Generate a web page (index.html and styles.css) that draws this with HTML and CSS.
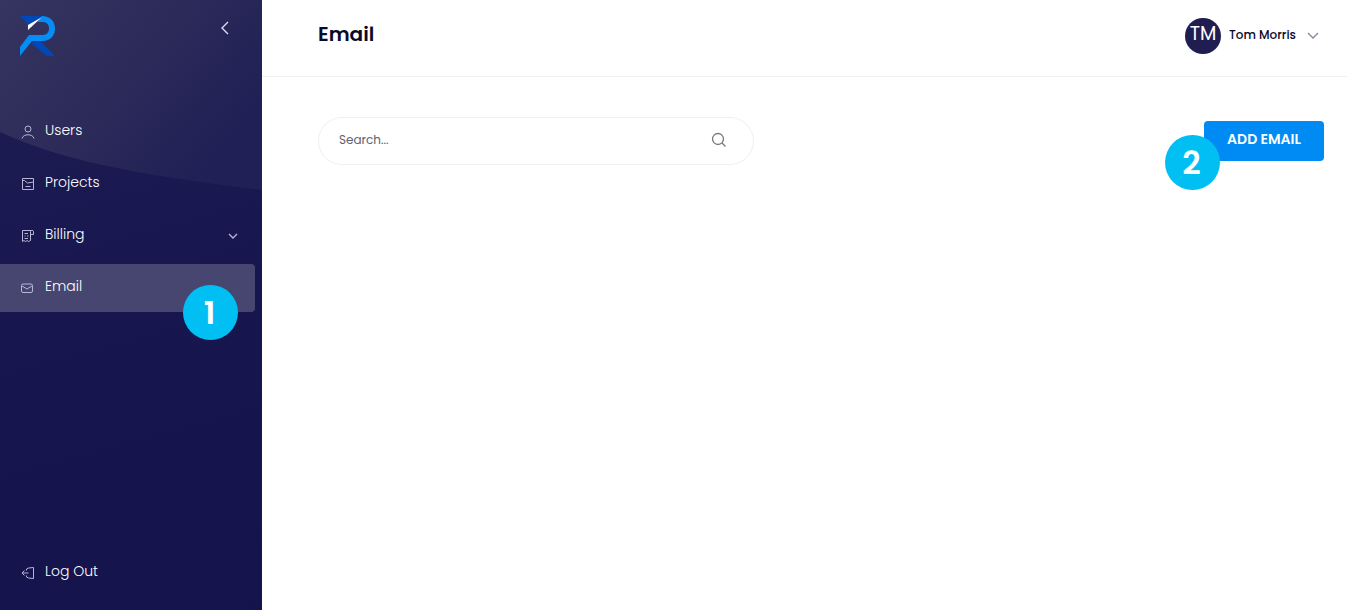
FILE: index.html
```
<!DOCTYPE html>
<html lang="en">
<head>
    <meta charset="UTF-8">
    <meta name="viewport" content="width=device-width, initial-scale=1.0">
    <title>Email</title>
    <link rel="stylesheet" href="styles.css">
</head>
<body>

    <aside class="sidebar">
        <svg class="sidebar-curve" viewBox="0 0 262 190" preserveAspectRatio="none" aria-hidden="true">
            <defs>
                <linearGradient id="curveFill" x1="0" y1="0" x2="1" y2="0.6">
                    <stop offset="0" stop-color="#363561"/>
                    <stop offset="0.5" stop-color="#2c2b59"/>
                    <stop offset="1" stop-color="#201f56"/>
                </linearGradient>
            </defs>
            <path d="M0 0H262V190C165 178 70 165 0 132Z" fill="url(#curveFill)"/>
        </svg>

        <div class="sidebar-top">
            <a href="#" class="logo" aria-label="Home">
                <svg width="36" height="40" viewBox="0 0 36 40">
                    <path d="M0 0H22L8 14L7 7Z" fill="#0048b8"/>
                    <path d="M13 25H20L35 40H27L12 28Z" fill="#0048b8"/>
                    <path d="M22 0C30 0 35 5 35 12.500C35 20 30 25 23 25H12L0 40V31L9 19H23C27 19 29 16 29 12.500C29 9 27 6 23 6H17Z" fill="#058cf5"/>
                    <path d="M8 14V9L22 1Z" fill="#fff"/>
                </svg>
            </a>
            <button class="collapse" aria-label="Collapse menu">
                <svg width="8" height="14" viewBox="0 0 8 14"><path d="M7 1L1 7L7 13"/></svg>
            </button>
        </div>

        <nav class="menu">
            <a href="#" class="menu-item">
                <svg width="14" height="14" viewBox="0 0 14 14"><circle cx="7" cy="4" r="3"/><path d="M1 13.500C2 8.500 12 8.500 13 13.500"/></svg>
                <span>Users</span>
            </a>
            <a href="#" class="menu-item">
                <svg width="14" height="14" viewBox="0 0 14 14"><path d="M1.500 1.500H12.500V12.500H1.500ZM1.500 3.500H3.500L6.500 6L12.500 5M4.500 9.500H9.500"/></svg>
                <span>Projects</span>
            </a>
            <a href="#" class="menu-item">
                <svg width="14" height="14" viewBox="0 0 14 14"><path d="M10.500 1.500H1.500V12.500L3 11.500L4.500 12.500L6 11.500L7.500 12.500L9.500 11.500V2.500C9.500 1 12.500 1 12.500 2.500V5.500H9.500M3.500 4.500H7M3.500 7H4.500M6 7H7.500M3.500 9.500H7"/></svg>
                <span>Billing</span>
                <svg class="menu-arrow" width="10" height="6" viewBox="0 0 10 6"><path d="M1 1L5 5L9 1"/></svg>
            </a>
            <a href="#" class="menu-item active">
                <svg width="14" height="14" viewBox="0 0 14 14"><rect x="0.500" y="3" width="11" height="8.500" rx="1.500"/><path d="M1 5L6 8L11 5"/></svg>
                <span>Email</span>
                <b class="step step-one">1</b>
            </a>
            <a href="#" class="menu-item logout">
                <svg width="14" height="14" viewBox="0 0 14 14"><path d="M5.500 4.500V3L7.500 2L12.500 1.500V12.500L7.500 12L5.500 11V9.500M7.500 7H1M3.500 4.500L1 7L3.500 9.500"/></svg>
                <span>Log Out</span>
            </a>
        </nav>
    </aside>

    <main class="main">
        <header class="header">
            <h1>Email</h1>
            <button class="account">
                <span class="avatar">TM</span>
                <span class="name">Tom Morris</span>
                <svg width="12" height="7" viewBox="0 0 12 7"><path d="M1 1L6 6L11 1"/></svg>
            </button>
        </header>

        <div class="toolbar">
            <form class="search">
                <input type="text" placeholder="Search..." aria-label="Search">
                <button type="button" aria-label="Run search">
                    <svg width="16" height="16" viewBox="0 0 16 16"><circle cx="7" cy="7" r="5.500"/><path d="M11 11L14.500 14.500"/></svg>
                </button>
            </form>
            <button class="add-email">ADD EMAIL<b class="step step-two">2</b></button>
        </div>
    </main>

</body>
</html>
```
FILE: styles.css
```
* {
    box-sizing: border-box;
}
body {
    font-family: Poppins, Inter, sans-serif;
    margin: 0;
    min-height: 100vh;
    display: flex;
    background-color: #fff;
    color: #09092b;
}
a {
    color: inherit;
    text-decoration: none;
}
button {
    font-family: inherit;
    border: none;
    background: none;
    padding: 0;
    cursor: pointer;
}
svg {
    display: block;
    flex: none;
}
.sidebar {
    position: relative;
    display: flex;
    flex-direction: column;
    flex: none;
    width: 262px;
    background: linear-gradient(165deg, #1e1d52 0%, #17164f 50%, #14134b 100%);
    color: #fff;
}
.sidebar-curve {
    position: absolute;
    top: 0;
    left: 0;
    width: 100%;
    height: 190px;
}
.sidebar-top {
    position: relative;
    display: flex;
    justify-content: space-between;
    align-items: flex-start;
    height: 108px;
    padding: 16px 33px 0 20px;
}
.collapse {
    padding-top: 5px;
}
.collapse svg {
    fill: none;
    stroke: #dcdcf0;
    stroke-width: 1.4;
}
.menu {
    position: relative;
    display: flex;
    flex-direction: column;
    flex: 1;
    gap: 4px;
    padding: 0 7px 13px 0;
}
.menu-item {
    position: relative;
    display: flex;
    align-items: center;
    gap: 10px;
    height: 48px;
    padding: 0 17px 0 21px;
    border-radius: 0 4px 4px 0;
    font-size: 14px;
    font-weight: 300;
    line-height: 20px;
}
.menu-item span {
    padding-bottom: 4px;
}
.menu-item svg {
    fill: none;
    stroke: #b6b5d6;
    stroke-width: 1;
}
.menu-item .menu-arrow {
    margin-left: auto;
    stroke-width: 1.4;
}
.menu-item.active {
    background-color: #474670;
}
.logout {
    margin-top: auto;
}
.step {
    position: absolute;
    display: flex;
    align-items: center;
    justify-content: center;
    width: 55px;
    height: 55px;
    padding-right: 2px;
    border-radius: 50%;
    background-color: #02bff3;
    color: #fff;
    font-size: 32px;
    font-weight: 600;
}
.step-one {
    top: 21px;
    right: 17px;
}
.step-two {
    top: 14px;
    left: -39px;
}
.main {
    flex: 1;
    min-width: 0;
}
.header {
    display: flex;
    justify-content: space-between;
    align-items: center;
    height: 77px;
    padding: 0 28px 5px 56px;
    border-bottom: 1px solid #f0f0f2;
}
.header h1 {
    margin: 0;
    padding-bottom: 3px;
    font-size: 20px;
    font-weight: 600;
}
.account {
    display: flex;
    align-items: center;
    gap: 8px;
    color: #09092b;
    font-size: 12px;
    font-weight: 500;
}
.account svg {
    margin-left: 3px;
    fill: none;
    stroke: #85859a;
    stroke-width: 1.3;
}
.name {
    padding-bottom: 2px;
}
.avatar {
    display: flex;
    align-items: center;
    justify-content: center;
    width: 36px;
    height: 36px;
    padding-bottom: 4px;
    border-radius: 50%;
    background-color: #201e50;
    color: #fff;
    font-size: 19px;
    font-weight: 400;
}
.toolbar {
    display: flex;
    justify-content: space-between;
    align-items: center;
    padding: 40px 23px 0 56px;
}
.search {
    display: flex;
    align-items: center;
    width: 436px;
    height: 48px;
    padding: 0 26px 3px 20px;
    border: 1px solid #f0f0f2;
    border-radius: 24px;
}
.search input {
    flex: 1;
    min-width: 0;
    padding: 0;
    border: none;
    outline: none;
    background: none;
    font-family: inherit;
    font-size: 12px;
}
.search input::placeholder {
    color: #62626e;
    opacity: 1;
}
.search svg {
    fill: none;
    stroke: #77777f;
    stroke-width: 1.3;
}
.add-email {
    position: relative;
    width: 120px;
    height: 40px;
    padding-bottom: 3px;
    border-radius: 4px;
    background-color: #008bf4;
    color: #fff;
    font-size: 14px;
    font-weight: 600;
}
```
